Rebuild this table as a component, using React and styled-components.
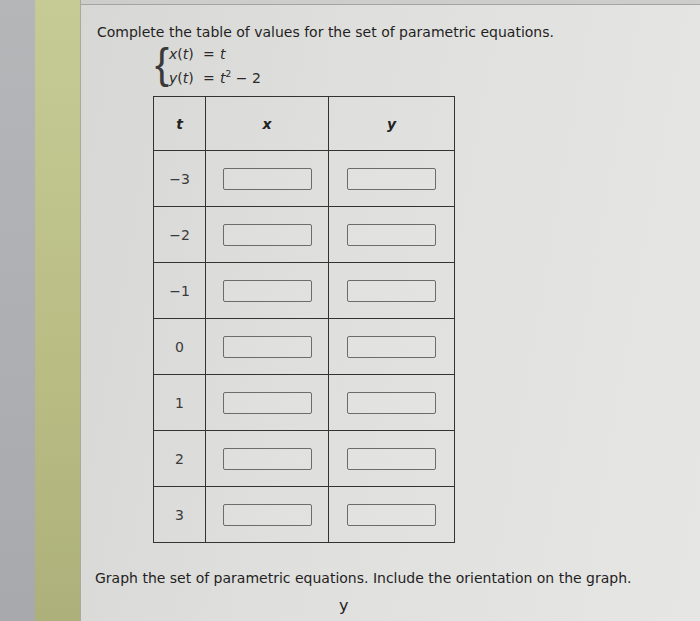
import styled, { createGlobalStyle } from 'styled-components';

const GlobalStyle = createGlobalStyle`
    html, body {
        margin: 0;
        padding: 0;
        background: #cfcfcf;
    }
`

const Screen = styled.div`
    display: flex;
    width: 700px;
    height: 621px;
    overflow: hidden;
    font-family: "DejaVu Sans", Verdana, sans-serif;
    color: #222;
`
const Bezel = styled.div`
    width: 35px;
    flex-shrink: 0;
    background: linear-gradient(180deg, #b4b6b8 0%, #a7a9ac 100%);
`
const SideStrip = styled.div`
    width: 45px;
    flex-shrink: 0;
    background: linear-gradient(180deg, #c6ca95 0%, #b9bd84 60%, #adb07a 100%);
    border-right: 1px solid #a9aa9c;
`
const Content = styled.div`
    flex: 1;
    display: flex;
    flex-direction: column;
    background: linear-gradient(100deg, #d7d7d5 0%, #dfdfdd 40%, #e6e6e4 100%);
`
const TopBand = styled.div`
    height: 4px;
    background: #cdcdcb;
    border-bottom: 1px solid #a4a4a2;
`
const Body = styled.div`
    display: flex;
    flex-direction: column;
    padding: 18px 0 0 16px;
`
const Prompt = styled.p`
    margin: 0;
    font-size: 14px;
    line-height: 18px;
    color: #1f1f1f;
    margin-left: ${p => p.$indent || 0}px;
`
const System = styled.div`
    display: flex;
    align-items: center;
    height: 50px;
    margin: 0 0 0 58px;
`
const Brace = styled.div`
    font-family: "Liberation Sans", sans-serif;
    font-size: 42px;
    line-height: 50px;
    color: #3a3a3a;
    margin-top: -4px;
`
const EqList = styled.div`
    display: flex;
    flex-direction: column;
    font-size: 14px;
    line-height: 24px;
    color: #2a2a2a;
`
const Eq = styled.div`
    display: grid;
    grid-template-columns: 34px 17px auto;
`
const Var = styled.i``
const Sup = styled.sup`
    font-size: 9px;
    line-height: 0;
`

const Table = styled.div`
    display: grid;
    grid-template-columns: 52px 123px 126px;
    width: fit-content;
    margin: 5px 0 0 56px;
    border-top: 1.5px solid #333;
    border-left: 1.5px solid #333;
`
const Cell = styled.div`
    height: ${p => (p.$head ? 54 : 56)}px;
    display: flex;
    align-items: center;
    justify-content: center;
    border-right: 1.5px solid #333;
    border-bottom: 1.5px solid #333;
    box-sizing: border-box;
    font-size: 14px;
    color: #3a3a3a;
`
const HeadLabel = styled.span`
    font-style: italic;
    font-weight: bold;
    color: #222;
    font-size: 14px;
`
const Entry = styled.div`
    width: 89px;
    height: 22px;
    border: 1.5px solid #6c6c6c;
    border-radius: 2px;
    box-sizing: border-box;
    background: rgba(255, 255, 255, 0.08);
`
const GraphSection = styled.div`
    display: flex;
    flex-direction: column;
    margin-top: 26px;
`
const AxisLabel = styled.div`
    font-family: "DejaVu Sans", sans-serif;
    font-size: 16px;
    font-weight: 500;
    color: #222;
    margin: 9px 0 0 242px;
`

const rows = ['\u22123', '\u22122', '\u22121', '0', '1', '2', '3'];

const App = () => {
    return (
        <Screen>
            <GlobalStyle />
            <Bezel />
            <SideStrip />
            <Content>
                <TopBand />
                <Body>
                    <Prompt>Complete the table of values for the set of parametric equations.</Prompt>
                    <System>
                        <Brace>{'{'}</Brace>
                        <EqList>
                            <Eq><span><Var>x</Var>(<Var>t</Var>)</span><span>=</span><span><Var>t</Var></span></Eq>
                            <Eq><span><Var>y</Var>(<Var>t</Var>)</span><span>=</span><span><Var>t</Var><Sup>2</Sup> {'\u2212'} 2</span></Eq>
                        </EqList>
                    </System>
                    <Table>
                        <Cell $head><HeadLabel>t</HeadLabel></Cell>
                        <Cell $head><HeadLabel>x</HeadLabel></Cell>
                        <Cell $head><HeadLabel>y</HeadLabel></Cell>
                        {rows.map(t => (
                            <>
                                <Cell key={t + 'a'}>{t}</Cell>
                                <Cell key={t + 'b'}><Entry /></Cell>
                                <Cell key={t + 'c'}><Entry /></Cell>
                            </>
                        ))}
                    </Table>
                    <GraphSection>
                        <Prompt $indent={-2}>Graph the set of parametric equations. Include the orientation on the graph.</Prompt>
                        <AxisLabel>y</AxisLabel>
                    </GraphSection>
                </Body>
            </Content>
        </Screen>
    )
}

export default App;
